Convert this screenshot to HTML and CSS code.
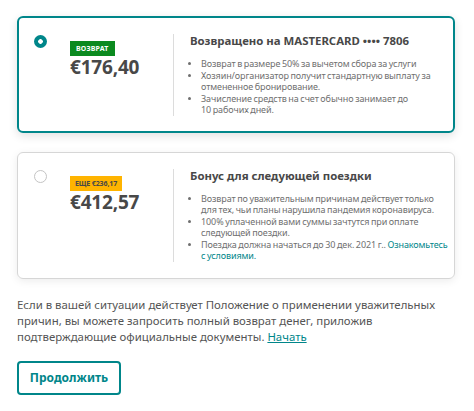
FILE: index.html
```html
<!DOCTYPE html>
<html>
<head>
<meta charset="utf-8">
<title>Возврат</title>
<meta name="viewport" content="width=device-width, initial-scale=1"/>
<link rel="stylesheet" href="styles.css">
</head>
<body>
<div class="page">

<div class="option selected">
	<span class="radio"></span>
	<div class="summary">
		<span class="badge badge-green">ВОЗВРАТ</span>
		<div class="price">€176,40</div>
	</div>
	<div class="details">
		<h4>Возвращено на MASTERCARD •••• 7806</h4>
		<ul>
			<li>Возврат в размере 50% за вычетом сбора за услуги</li>
			<li>Хозяин/организатор получит стандартную выплату за<br>отмененное бронирование.</li>
			<li>Зачисление средств на счет обычно занимает до<br>10 рабочих дней.</li>
		</ul>
	</div>
</div>

<div class="option">
	<span class="radio"></span>
	<div class="summary">
		<span class="badge badge-orange">ЕЩЕ €236,17</span>
		<div class="price">€412,57</div>
	</div>
	<div class="details">
		<h4>Бонус для следующей поездки</h4>
		<ul>
			<li>Возврат по уважительным причинам действует только<br>для тех, чьи планы нарушила пандемия коронавируса.</li>
			<li>100% уплаченной вами суммы зачтутся при оплате<br>следующей поездки.</li>
			<li>Поездка должна начаться до 30 дек. 2021 г.. <a href="#" class="terms">Ознакомьтесь<br>с условиями.</a></li>
		</ul>
	</div>
</div>

<p class="note">Если в вашей ситуации действует Положение о применении уважительных причин, вы можете запросить полный возврат денег, приложив подтверждающие официальные документы. <a href="#" class="start">Начать</a></p>

<button class="go">Продолжить</button>

</div>
</body></html>
```

FILE: styles.css
```css
body {margin: 0; background: #fff; font-family: "Noto Sans", sans-serif; color: #484848;}
.page {width: 438px; padding: 16px 0 0 17px;}

.option {display: flex; align-items: stretch; border: 1px solid #d6d6d6; border-radius: 6px; padding: 16px 8px 16px 16px; margin-bottom: 18px; box-shadow: 0 2px 8px rgba(0,0,0,0.08);}
.option.selected {border: 2px solid #00868a; padding: 16px 7px 15px 15px; margin-bottom: 19px; box-shadow: 0 3px 10px rgba(0,0,0,0.12);}

.radio {flex: none; width: 13px; height: 13px; border-radius: 50%; box-sizing: border-box; border: 1px solid #c4c4c4; margin-top: 1px;}
.selected .radio {border: none; background: radial-gradient(circle, #fff 0, #fff 2px, #00868a 2.6px);}

.summary {flex: none; width: 103px; margin-left: 23px; border-right: 1px solid #dcdcdc;}
.badge {display: inline-block; font-size: 7px; font-weight: 700; line-height: 15px; padding: 0 6px; letter-spacing: 0.2px;}
.badge-green {background: #0b8a1f; color: #fff;}
.badge-orange {background: #ffb400; color: #484848; padding: 0 5px; letter-spacing: -0.1px;}
.price {font-size: 19px; font-weight: 700; line-height: 22px; margin-top: 0; letter-spacing: -0.2px;}

.details {flex: 1; padding-left: 16px;}
h4 {margin: 0; font-size: 11.4px; line-height: 14px; font-weight: 700; color: #484848;}
ul {margin: 10px 0 0; padding-left: 11px; font-size: 9px; line-height: 11.5px; color: #6f6f6f; white-space: nowrap; letter-spacing: -0.1px; word-spacing: -0.6px;}
li::marker {font-size: 8px;}
.terms {color: #00868a; text-decoration: none;}

.note {margin: 0; font-size: 11.4px; line-height: 16px; color: #555;}
.start {color: #00868a;}

.go {margin-top: 16px; width: 104px; height: 34px; background: #fff; border: 2px solid #00868a; border-radius: 4px; color: #00868a; font: 700 12px "Noto Sans", sans-serif;}
```
